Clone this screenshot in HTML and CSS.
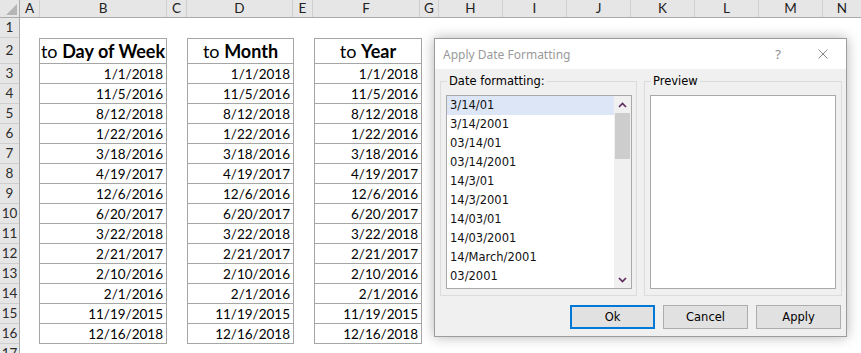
FILE: index.html
```html
<!DOCTYPE html>
<html lang="en">
<head>
  <meta charset="UTF-8">
  <title>Apply Date Formatting</title>
  <link rel="stylesheet" href="styles.css">
</head>
<body>
  <!-- Column headers -->
  <div class="col-heads">
    <div class="corner"><span class="corner-tri"></span></div>
    <div class="w-a">A</div>
    <div class="w-b">B</div>
    <div class="w-c">C</div>
    <div class="w-d">D</div>
    <div class="w-e">E</div>
    <div class="w-f">F</div>
    <div class="w-g">G</div>
    <div class="w-h">H</div>
    <div class="w-h">I</div>
    <div class="w-h">J</div>
    <div class="w-h">K</div>
    <div class="w-h">L</div>
    <div class="w-h">M</div>
    <div class="w-n">N</div>
  </div>

  <div class="sheet-body">
    <!-- Row headers -->
    <div class="row-heads">
      <div>1</div>
      <div class="tall">2</div>
      <div>3</div>
      <div>4</div>
      <div>5</div>
      <div>6</div>
      <div>7</div>
      <div>8</div>
      <div>9</div>
      <div>10</div>
      <div>11</div>
      <div>12</div>
      <div>13</div>
      <div>14</div>
      <div>15</div>
      <div>16</div>
      <div>17</div>
    </div>

    <!-- Cell area -->
    <div class="cells">
      <div class="tbl tbl-b">
        <div class="th">to <b>Day of Week</b></div>
        <div class="td">1/1/2018</div>
        <div class="td">11/5/2016</div>
        <div class="td">8/12/2018</div>
        <div class="td">1/22/2016</div>
        <div class="td">3/18/2016</div>
        <div class="td">4/19/2017</div>
        <div class="td">12/6/2016</div>
        <div class="td">6/20/2017</div>
        <div class="td">3/22/2018</div>
        <div class="td">2/21/2017</div>
        <div class="td">2/10/2016</div>
        <div class="td">2/1/2016</div>
        <div class="td">11/19/2015</div>
        <div class="td">12/16/2018</div>
      </div>
      <div class="tbl tbl-d">
        <div class="th">to <b>Month</b></div>
        <div class="td">1/1/2018</div>
        <div class="td">11/5/2016</div>
        <div class="td">8/12/2018</div>
        <div class="td">1/22/2016</div>
        <div class="td">3/18/2016</div>
        <div class="td">4/19/2017</div>
        <div class="td">12/6/2016</div>
        <div class="td">6/20/2017</div>
        <div class="td">3/22/2018</div>
        <div class="td">2/21/2017</div>
        <div class="td">2/10/2016</div>
        <div class="td">2/1/2016</div>
        <div class="td">11/19/2015</div>
        <div class="td">12/16/2018</div>
      </div>
      <div class="tbl tbl-f">
        <div class="th">to <b>Year</b></div>
        <div class="td">1/1/2018</div>
        <div class="td">11/5/2016</div>
        <div class="td">8/12/2018</div>
        <div class="td">1/22/2016</div>
        <div class="td">3/18/2016</div>
        <div class="td">4/19/2017</div>
        <div class="td">12/6/2016</div>
        <div class="td">6/20/2017</div>
        <div class="td">3/22/2018</div>
        <div class="td">2/21/2017</div>
        <div class="td">2/10/2016</div>
        <div class="td">2/1/2016</div>
        <div class="td">11/19/2015</div>
        <div class="td">12/16/2018</div>
      </div>
    </div>
  </div>

  <!-- Dialog -->
  <div class="dialog">
    <div class="dlg-title">
      <span class="dlg-caption">Apply Date Formatting</span>
      <span class="dlg-help">?</span>
      <span class="dlg-close">
        <svg width="10" height="10" viewBox="0 0 10 10"><path d="M0.5 0.5L9.5 9.5M9.5 0.5L0.5 9.5" stroke="#8a8a8a" stroke-width="1" fill="none"/></svg>
      </span>
    </div>
    <div class="dlg-body">
      <div class="groups">
        <fieldset class="group group-list">
          <legend>Date formatting:</legend>
          <div class="listbox">
            <ul class="list">
              <li class="sel">3/14/01</li>
              <li>3/14/2001</li>
              <li>03/14/01</li>
              <li>03/14/2001</li>
              <li>14/3/01</li>
              <li>14/3/2001</li>
              <li>14/03/01</li>
              <li>14/03/2001</li>
              <li>14/March/2001</li>
              <li>03/2001</li>
            </ul>
            <div class="scrollbar">
              <div class="sb-btn">
                <svg width="9" height="6" viewBox="0 0 9 6"><polyline points="1,5 4.5,1.5 8,5" stroke="#5e2a5e" stroke-width="1.7" fill="none"/></svg>
              </div>
              <div class="sb-thumb"></div>
              <div class="sb-track"></div>
              <div class="sb-btn">
                <svg width="9" height="6" viewBox="0 0 9 6"><polyline points="1,1 4.5,4.5 8,1" stroke="#5e2a5e" stroke-width="1.7" fill="none"/></svg>
              </div>
            </div>
          </div>
        </fieldset>
        <fieldset class="group group-preview">
          <legend>Preview</legend>
          <div class="preview"></div>
        </fieldset>
      </div>
      <div class="buttons">
        <button class="btn default">Ok</button>
        <button class="btn">Cancel</button>
        <button class="btn">Apply</button>
      </div>
    </div>
  </div>
</body>
</html>
```

FILE: styles.css
```css
/* Page */
body {
  margin: 0;
  width: 861px;
  height: 353px;
  overflow: hidden;
  position: relative;
  background: #fff;
  font-family: Lato, "Liberation Sans", sans-serif;
  color: #000;
}

/* Column headers */
.col-heads {
  display: flex;
  height: 18px;
  box-sizing: border-box;
  background: #e6e6e6;
  border-bottom: 1px solid #ababab;
}

.col-heads div {
  box-sizing: border-box;
  border-right: 1px solid #cfcfcf;
  text-align: center;
  font-size: 13.5px;
  line-height: 17px;
  color: #222;
}

.col-heads .corner {
  width: 20px;
  position: relative;
  border-right-color: #ababab;
}

.corner-tri {
  position: absolute;
  right: 2px;
  bottom: 2px;
  width: 0;
  height: 0;
  border-left: 11px solid transparent;
  border-bottom: 11px solid #b5b5b5;
}

.w-a, .w-c, .w-e { width: 20px; }
.w-b { width: 127px; }
.w-d { width: 106px; }
.w-f { width: 107px; }
.w-g { width: 19px; }
.w-h { width: 64px; }
.w-n { flex: 1; border-right: none !important; }

/* Sheet body */
.sheet-body {
  display: flex;
  align-items: flex-start;
}

.row-heads {
  width: 20px;
  box-sizing: border-box;
  background: #e6e6e6;
  border-right: 1px solid #ababab;
}

.row-heads div {
  height: 20px;
  box-sizing: border-box;
  border-bottom: 1px solid #cfcfcf;
  text-align: center;
  font-size: 13.5px;
  line-height: 19px;
  color: #2c2c2c;
}

.row-heads .tall {
  height: 26px;
  line-height: 25px;
}

.cells {
  display: flex;
  align-items: flex-start;
  gap: 20px;
  padding: 20px 0 0 19px;
}

.tbl {
  box-sizing: border-box;
  border: 1px solid #a6a6a6;
  border-bottom: none;
}

.tbl-b { width: 128px; }
.tbl-d { width: 107px; }
.tbl-f { width: 108px; }

.tbl .th {
  height: 25px;
  box-sizing: border-box;
  border-bottom: 1px solid #a6a6a6;
  text-align: center;
  font-size: 18px;
  line-height: 25px;
}

.tbl .td {
  height: 20px;
  box-sizing: border-box;
  border-bottom: 1px solid #a6a6a6;
  text-align: right;
  padding-right: 3px;
  font-size: 13.5px;
  line-height: 20px;
}

/* Dialog */
.dialog {
  position: absolute;
  left: 434px;
  top: 38px;
  width: 413px;
  height: 299px;
  box-sizing: border-box;
  border: 1px solid #9c9c9c;
  background: #f0f0f0;
  box-shadow: 0 0 12px rgba(0, 0, 0, 0.3);
  font-family: "DejaVu Sans", Verdana, sans-serif;
}

.dlg-title {
  display: flex;
  align-items: center;
  height: 30px;
  background: #fff;
}

.dlg-caption {
  flex: 1;
  padding-left: 8px;
  font-family: "Noto Sans", "Liberation Sans", sans-serif;
  font-size: 12px;
  color: #9a9a9a;
}

.dlg-help {
  width: 44px;
  text-align: center;
  font-family: "Noto Sans", sans-serif;
  font-size: 13px;
  color: #8a8a8a;
}

.dlg-close {
  width: 46px;
  display: flex;
  justify-content: center;
}

.dlg-body {
  padding: 5px 4px 7px 5px;
}

.groups {
  display: flex;
  gap: 7px;
}

.group {
  margin: 0;
  min-width: 0;
  box-sizing: border-box;
  border: 1px solid #dcdcdc;
  padding: 6px 4px 6px 5px;
}

.group-list { width: 197px; }
.group-preview { width: 198px; padding-right: 5px; }

.group legend {
  padding: 0 2px;
  margin-left: 1px;
  font-size: 11.5px;
  line-height: 15px;
}

.listbox {
  display: flex;
  height: 194px;
  box-sizing: border-box;
  border: 1px solid #a9a9a9;
  background: #fff;
}

.list {
  flex: 1;
  margin: 0;
  padding: 0;
  list-style: none;
}

.list li {
  height: 19px;
  line-height: 19px;
  padding-left: 3px;
  font-size: 11.5px;
  color: #111;
}

.list li.sel {
  background: #dce6f7;
}

.scrollbar {
  width: 17px;
  display: flex;
  flex-direction: column;
  background: #f0f0f0;
}

.sb-btn {
  height: 17px;
  display: flex;
  align-items: center;
  justify-content: center;
}

.sb-thumb {
  height: 46px;
  margin: 0 1px;
  background: #cdcdcd;
}

.sb-track {
  flex: 1;
}

.preview {
  height: 194px;
  box-sizing: border-box;
  border: 1px solid #a9a9a9;
  background: #fff;
}

/* Buttons */
.buttons {
  display: flex;
  justify-content: flex-end;
  gap: 8px;
  margin-top: 9px;
  padding-right: 1px;
}

.btn {
  width: 85px;
  height: 24px;
  box-sizing: border-box;
  border: 1px solid #adadad;
  background: #e1e1e1;
  font-family: "DejaVu Sans", Verdana, sans-serif;
  font-size: 11.5px;
  color: #000;
  padding: 0;
}

.btn.default {
  border: 2px solid #0078d7;
}
```
